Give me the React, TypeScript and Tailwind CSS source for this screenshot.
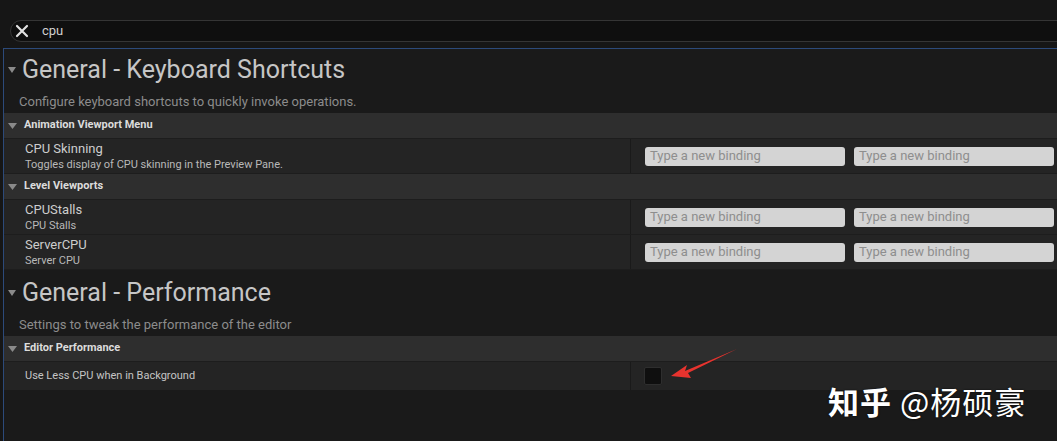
import React from 'react';

const Tri = ({ w = 9 }: { w?: number }) => (
  <svg width={w} height="6" viewBox="0 0 9 6" preserveAspectRatio="none" className="shrink-0">
    <path d="M0 0 L9 0 L4.5 6 Z" fill="#8a8a8a" />
  </svg>
);

function SectionHeader({ title, desc, pad = 0 }: { title: string; desc: string; pad?: number }) {
  return (
    <div style={{ paddingTop: pad }}>
      <div className="h-[41px] flex items-center pl-[4px] gap-[6px]">
        <Tri w={8} />
        <span className="text-[25px] leading-none text-[#c6c6c6]">{title}</span>
      </div>
      <div className="h-[23px] flex items-center pl-[15px] text-[13px] text-[#8c8c8c]">{desc}</div>
    </div>
  );
}

function Category({ name }: { name: string }) {
  return (
    <div className="h-[26px] flex items-center pl-[4px] gap-[7px] bg-[#2e2e2e] border-b border-[#1d1d1d]">
      <Tri />
      <span className="text-[11px] font-bold text-[#dcdcdc]">{name}</span>
    </div>
  );
}

function Binding() {
  return (
    <div className="w-[200px] h-[19px] rounded-[3px] bg-[#d4d4d4] flex items-center px-[5px] text-[13px] text-[#8e8e8e]">
      Type a new binding
    </div>
  );
}

function ShortcutRow({ name, desc }: { name: string; desc: string }) {
  return (
    <div className="h-[35px] flex bg-[#242424] border-b border-[#1d1d1d]">
      <div className="w-[627px] pl-[21px] flex flex-col justify-center border-r border-[#1a1a1a]">
        <span className="text-[13px] leading-[16px] text-[#cdcdcd]">{name}</span>
        <span className="text-[11px] leading-[15px] text-[#b9b9b9]">{desc}</span>
      </div>
      <div className="flex items-center gap-[9px] pl-[14px]">
        <Binding />
        <Binding />
      </div>
    </div>
  );
}

export default function App() {
  return (
    <div
      className="w-[1057px] h-[441px] bg-[#161616] overflow-hidden relative"
      style={{ fontFamily: 'Roboto, "Noto Sans", sans-serif' }}
    >
      {/* search bar */}
      <div className="pt-[20px] pl-[10px] h-[48px]">
        <div className="h-[22px] -mr-6 rounded-l-full border border-[#353535] bg-[#0f0f0f] flex items-center gap-[13px] pl-[4px]">
          <svg width="14" height="14" viewBox="0 0 14 14">
            <path d="M2 2 L12 12 M12 2 L2 12" stroke="#e2e2e2" strokeWidth="2.2" strokeLinecap="round" />
          </svg>
          <span className="text-[13px] text-[#cfcfcf]">cpu</span>
        </div>
      </div>

      {/* details panel */}
      <div className="ml-[3px] h-[393px] border-t border-l border-[#2c4a7a] bg-[#1a1a1a]">
        <SectionHeader
          title="General - Keyboard Shortcuts"
          desc="Configure keyboard shortcuts to quickly invoke operations."
        />
        <Category name="Animation Viewport Menu" />
        <ShortcutRow name="CPU Skinning" desc="Toggles display of CPU skinning in the Preview Pane." />
        <Category name="Level Viewports" />
        <ShortcutRow name="CPUStalls" desc="CPU Stalls" />
        <ShortcutRow name="ServerCPU" desc="Server CPU" />

        <SectionHeader title="General - Performance" desc="Settings to tweak the performance of the editor" pad={2} />
        <Category name="Editor Performance" />
        <div className="h-[28px] flex bg-[#242424]">
          <div className="w-[627px] pl-[21px] flex items-center border-r border-[#1a1a1a] text-[11px] text-[#c4c4c4]">
            Use Less CPU when in Background
          </div>
          <div className="flex items-center pl-[13px]">
            <div className="w-[18px] h-[18px] rounded-[2px] bg-[#0f0f0f] border border-[#2e2e2e]" />
          </div>
        </div>
      </div>

      {/* red arrow annotation */}
      <svg className="absolute left-[665px] top-[344px]" width="80" height="40" viewBox="0 0 80 40">
        <path d="M72 5 L20 27 L22 21 L6 32 L26 34 L23 29 Z" fill="#e8332e" />
      </svg>

      {/* watermark */}
      <div
        className="absolute left-[828px] top-[378px] text-[31px] text-white tracking-[1px] whitespace-nowrap"
        style={{
          fontFamily: '"Noto Sans CJK SC", sans-serif',
          textShadow: '0 0 2px rgba(0,0,0,0.8)',
        }}
      >
        <span className="font-bold">知乎</span> @杨硕豪
      </div>
    </div>
  );
}
